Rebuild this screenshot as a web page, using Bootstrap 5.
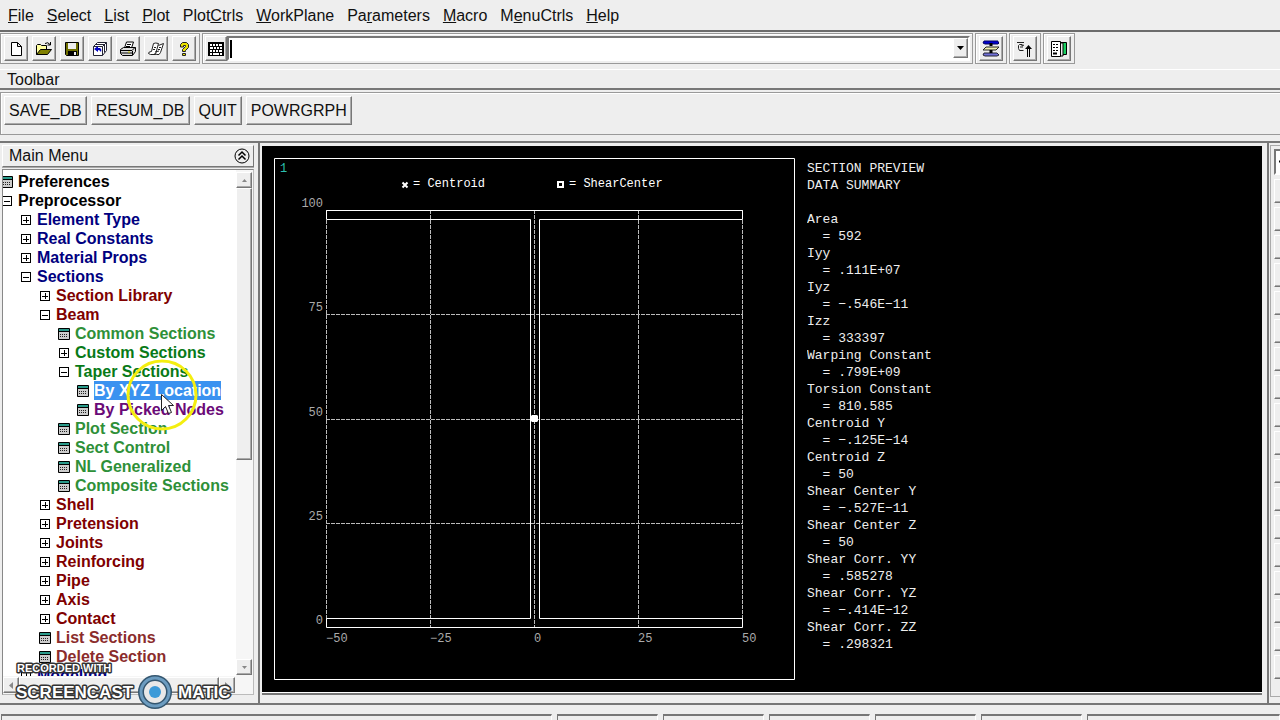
<!DOCTYPE html>
<html lang="en">
<head>
<meta charset="utf-8">
<meta name="viewport" content="width=device-width, initial-scale=1">
<title>Section Preview</title>
<link href="https://cdn.jsdelivr.net/npm/bootstrap@5.3.0/dist/css/bootstrap.min.css" rel="stylesheet">
<style>
  body { background: #eee; color: #111; font: 16px/20px "Liberation Sans", Arial, sans-serif; }
  .app { height: 100vh; min-height: 480px; }
  a { color: inherit; text-decoration: none; }
  .menus { height: 32px; gap: 13px; padding: 1px 8px 0; border-bottom: 2px solid #6c6c6c; }
  .icon-row { height: 37px; gap: 2px; padding-top: 1px; }
  .group-box { display: flex; align-items: center; border: 1px solid #999; box-shadow: inset 1px 1px #fff; height: 31px; padding: 0 3px; }
  .raised { background: #eee; border: 1px solid; border-color: #fff #777 #777 #fff; box-shadow: inset -1px -1px #aaa; padding: 0; border-radius: 0; color: #111; }
  .tool { width: 24px; height: 25px; display: flex; align-items: center; justify-content: center; }
  .tool svg { display: block; }
  .cmd-box { padding: 0 2px; }
  .cmd-box .tool { width: 22px; }
  .cmd { border: 2px solid; border-color: #777 #fff #fff #777; border-radius: 0; height: 25px; background: #fff; }
  .cmd input { border: 0; outline: 0; padding: 0 2px; height: 21px; font: inherit; caret-color: #000; min-width: 0; }
  .caret { width: 2px; height: 18px; background: #000; margin: 2px 0 0 1px; }
  .drop { width: 15px; height: 20px; }
  .caption-bar { height: 21px; padding: 0 7px; border-top: 1px solid #fff; border-bottom: 2px solid #777; }
  .macro-row { height: 43px; margin-top: 2px; padding: 3px 3px 0; gap: 4px; border: 1px solid #999; border-right: 0; box-shadow: inset 1px 1px #fff; }
  .macro-row .raised { height: 29px; padding: 0 4px; line-height: 25px; }
  .work { margin-top: 6px; border-top: 2px solid #777; border-bottom: 2px solid #777; }
  .side { width: 260px; padding: 2px 4px 8px 2px; border-right: 2px solid #777; }
  .side-head { height: 22px; padding: 0 3px 0 6px; border: 1px solid; border-color: #fff #777 #777 #fff; box-shadow: 0 1px #aaa; }
  .tree-box { margin-top: 2px; border: 1px solid; border-color: #888 #bbb #bbb #888; background: #fff; }
  .tree { font-weight: bold; line-height: 19px; white-space: nowrap; }
  .tree > ul { margin: 2px 0 0 -2px; }
  .tree ul ul { padding-left: 19px; }
  .node { display: flex; align-items: center; gap: 5px; height: 19px; }
  .node svg { width: 12px; height: 12px; flex: none; }
  .l0 { color: #000; } .l1 { color: #000080; } .l2 { color: #800000; } .l2c { color: #8b2c2c; }
  .l3 { color: #087a18; } .l3c { color: #2e9038; } .l4 { color: #6b0a78; }
  .picked { background: #3a92f0; color: #fff; }
  .vscroll { width: 17px; background: #f6f6f6; padding: 2px 1px 1px 0; }
  .sb { width: 16px; height: 16px; flex: none; display: flex; align-items: center; justify-content: center; }
  .thumb { background: #efefef; }
  .hscroll { height: 18px; background: #f6f6f6; padding: 1px 18px 1px 0; }
  .view-col { padding: 3px 5px 10px 2px; }
  .view { background: #000; color: #fff; padding: 12px; gap: 11px; border-bottom: 1px solid #fff; box-shadow: 0 2px #777; }
  .view svg { flex: none; width: 522px; height: 523px; }
  .view svg text { font: 12px "Liberation Mono", "Courier New", monospace; fill: #fff; }
  .view svg .tick { fill: #aaa; }
  .summary { margin: 2px 0 0; font: 13px/17px "Liberation Mono", "Courier New", monospace; color: #eee; }
  .dock { width: 13px; border-left: 2px solid #777; padding: 2px 0 6px 1px; }
  .dock-in { border: 1px solid #aaa; border-right: 0; padding: 3px 0 0 3px; height: 100%; gap: 4px; }
  .dock .pick { border: 2px solid; border-color: #777 #fff #fff #777; background: #fff; height: 26px; width: 30px; flex: none; padding: 0; border-radius: 0; }
  .dock .raised { width: 30px; height: 24px; flex: none; }
  .status-row { height: 15px; padding: 9px 0 0 1px; gap: 5px; }
  .cell { border: 1px solid #777; border-bottom: 0; border-right-color: #fff; border-top-width: 2px; height: 6px; }
  .cell-s { width: 101px; }
  .overlay { position: absolute; pointer-events: none; }
  .recorder text { font: bold 17px "Liberation Sans", Arial, sans-serif; fill: #fff; stroke: #333; stroke-width: 3px; paint-order: stroke; stroke-linejoin: round; }
  .recorder .top-line { font-size: 11px; }
</style>
<script src="https://cdn.jsdelivr.net/npm/bootstrap@5.3.0/dist/js/bootstrap.bundle.min.js"></script>
</head>
<body>
<svg class="d-none" aria-hidden="true">
  <symbol id="plus" viewBox="0 0 12 12"><path d="M1.5 1.5h9v9h-9zM3 6h6M6 3v6" fill="#fff" stroke="#000" shape-rendering="crispEdges"/></symbol>
  <symbol id="minus" viewBox="0 0 12 12"><path d="M1.5 1.5h9v9h-9zM3 6h6" fill="#fff" stroke="#000" shape-rendering="crispEdges"/></symbol>
  <symbol id="dlg" viewBox="0 0 12 12"><path d="M.5.5h11v11H.5z" fill="#ccc" stroke="#000"/><path d="M1 1h10v2H1z" fill="#2a9a8a"/><path d="M1 3.5h10" stroke="#000"/><path d="M2 6.500h8M2 8.500h8" stroke="#222" stroke-dasharray="1 1"/></symbol>
</svg>
<div class="app d-flex flex-column overflow-hidden position-relative">
  <nav class="menus d-flex align-items-center flex-shrink-0">
    <a href="#"><u>F</u>ile</a><a href="#"><u>S</u>elect</a><a href="#"><u>L</u>ist</a><a href="#"><u>P</u>lot</a><a href="#">Plot<u>C</u>trls</a><a href="#"><u>W</u>orkPlane</a><a href="#">Pa<u>r</u>ameters</a><a href="#"><u>M</u>acro</a><a href="#">M<u>e</u>nuCtrls</a><a href="#"><u>H</u>elp</a>
  </nav>

  <div class="icon-row d-flex flex-shrink-0">
    <div class="group-box gap-1">
      <button class="raised tool" aria-label="New"><svg width="18" height="18" viewBox="0 0 18 18"><path d="M4.500 2.500h6l4 4v9h-10zM10.500 2.500v4h4" fill="#fff" stroke="#000"/></svg></button>
      <button class="raised tool" aria-label="Open"><svg width="18" height="18" viewBox="0 0 18 18"><path d="M1.500 14.500v-9l1-1h3l1 1h5v4" fill="#ffffa0" stroke="#000"/><path d="M1.500 14.500l4-5h11l-4 5z" fill="#808000" stroke="#000"/><path d="M10 3.500q3-2 5 1M15.500 2v3h-3" fill="none" stroke="#000"/></svg></button>
      <button class="raised tool" aria-label="Save"><svg width="18" height="18" viewBox="0 0 18 18"><path d="M2.500 2.500h13v13h-12l-1-1z" fill="#6f6f00" stroke="#000"/><path d="M5 3h8v6H5z" fill="#eee"/><path d="M5 11h9v5H5z" fill="#000"/><path d="M11 12h2v3h-2z" fill="#eee"/></svg></button>
      <button class="raised tool" aria-label="Resume"><svg width="18" height="18" viewBox="0 0 18 18"><path d="M2.500 6.500l4-4h9v8l-4 5h-9zM2.500 6.500h9v9M11.500 6.500l4-4M4.500 4.500h9v8" fill="#fff" stroke="#223"/><path d="M3 9l4-3v2h2q2 1 1 4-1-2-3-2v2z" fill="#0000c0"/></svg></button>
      <button class="raised tool" aria-label="Print"><svg width="18" height="18" viewBox="0 0 18 18"><path d="M5.500 8l2-6h7l-2 6" fill="#fff" stroke="#000"/><path d="M8 4.500h4M7 6.500h4" stroke="#000"/><path d="M1.500 9.500l3-2h12v4l-3 4h-10l-2-2z" fill="#ddd" stroke="#000"/><path d="M2 10.500h11l3-3M2 13h11M13.500 11v4" fill="none" stroke="#000"/><path d="M9 12h2" stroke="#cc0" /></svg></button>
      <button class="raised tool" aria-label="Report"><svg width="18" height="18" viewBox="0 0 18 18"><path d="M6.500 3.500l-2 8q-3 0-3 2l2 1h5l3-11q-3-1-5 0zM11.500 5.500l5-2-3 9q-1 3-4 2l-2-1" fill="#fff" stroke="#222"/><path d="M7 7.500h2M6 9.500h2M12 7.500h2M11 9.500h2M8 12l4-1" stroke="#222"/></svg></button>
      <button class="raised tool" aria-label="Help"><svg width="18" height="18" viewBox="0 0 18 18"><path d="M5.500 7V4.500l2-2h4l2 2v3l-3 3v1h-3v-2l3-3v-1h-2V7zM7.500 13.500h3v2h-3z" fill="#e8e000" stroke="#222"/></svg></button>
    </div>
    <div class="group-box cmd-box" style="width:60.2%">
      <button class="raised tool flex-shrink-0" aria-label="Command history"><svg width="18" height="18" viewBox="0 0 18 18" shape-rendering="crispEdges"><path d="M1 2h16v14H1z"/><path d="M3 5h2M6 5h2M9 5h2M12 5h3M3 8h3M7 8h2M10 8h2M13 8h2M3 11h2M6 11h2M9 11h2M12 11h3M3 14h2M6 14h6M13 14h2" stroke="#fff" stroke-width="2"/></svg></button>
      <div class="cmd d-flex flex-grow-1"><span class="caret"></span><input class="flex-grow-1" type="text" aria-label="Command"><button class="raised drop" aria-label="Show recent commands"><svg width="7" height="4" viewBox="0 0 7 4" class="d-block mx-auto"><path d="M0 0h7L3.500 4z"/></svg></button></div>
    </div>
    <div class="group-box"><button class="raised tool" aria-label="Raise hidden"><svg width="18" height="18" viewBox="0 0 18 18"><path d="M2 1h14v1l1 1-1 1H3L1 3z" fill="#0000d0" stroke="#000060"/><path d="M1 10l3-3h13l-3 3z" fill="#eeeeb0" stroke="#222"/><path d="M2 13h13l2 2-2 1H3l-2-1z" fill="#7070d8" stroke="#223"/><path d="M9 3v3M9 10v3" stroke="#000" stroke-width="3"/></svg></button></div>
    <div class="group-box"><button class="raised tool" aria-label="Reset picking"><svg width="18" height="18" viewBox="0 0 18 18"><path d="M1 2.500h7M6 4.500H3.500l-1 1v3l1 2h4M6 4v2l2-1M4 7h3" fill="none" stroke="#222"/><path d="M9 9l3.500-4L16 9z"/><path d="M11.500 8v9M13.500 8v9" stroke="#000"/></svg></button></div>
    <div class="group-box"><button class="raised tool" aria-label="Contact manager"><svg width="18" height="18" viewBox="0 0 18 18"><path d="M9.500 2.500h7v12h-7z" fill="#18d060" stroke="#000"/><path d="M10 3h3v13h-3z" fill="#eee" stroke="#000"/><path d="M1.500 1.500h9v15h-9z" fill="#fff" stroke="#000"/><path d="M3 4.500h6M3 7.500h6M3 10.500h6" stroke="#000" stroke-dasharray="2 1"/><path d="M3 13.500h4" stroke="#000" stroke-width="2"/></svg></button></div>
  </div>

  <div class="caption-bar flex-shrink-0">Toolbar</div>
  <div class="macro-row d-flex align-items-start flex-shrink-0">
    <button class="raised">SAVE_DB</button><button class="raised">RESUM_DB</button><button class="raised">QUIT</button><button class="raised">POWRGRPH</button>
  </div>

  <main class="work d-flex flex-grow-1 overflow-hidden">
    <aside class="side d-flex flex-column flex-shrink-0">
      <div class="side-head d-flex align-items-center justify-content-between flex-shrink-0">Main Menu
        <button class="border-0 p-0 bg-transparent d-flex" aria-label="Collapse menu"><svg width="16" height="16" viewBox="0 0 16 16" fill="none" stroke="#000"><circle cx="8" cy="8" r="7"/><path d="M4.500 7.500L8 4l3.500 3.500M4.500 11.500L8 8l3.500 3.500" stroke-width="1.500"/></svg></button>
      </div>
      <div class="tree-box d-flex flex-column flex-grow-1 overflow-hidden">
        <div class="d-flex flex-grow-1 overflow-hidden">
          <div class="tree flex-grow-1 overflow-hidden">
            <ul class="list-unstyled">
              <li><div class="node l0"><svg><use href="#dlg"/></svg><a href="#">Preferences</a></div></li>
              <li><div class="node l0"><svg><use href="#minus"/></svg><a href="#">Preprocessor</a></div>
                <ul class="list-unstyled">
                  <li><div class="node l1"><svg><use href="#plus"/></svg><a href="#">Element Type</a></div></li>
                  <li><div class="node l1"><svg><use href="#plus"/></svg><a href="#">Real Constants</a></div></li>
                  <li><div class="node l1"><svg><use href="#plus"/></svg><a href="#">Material Props</a></div></li>
                  <li><div class="node l1"><svg><use href="#minus"/></svg><a href="#">Sections</a></div>
                    <ul class="list-unstyled">
                      <li><div class="node l2"><svg><use href="#plus"/></svg><a href="#">Section Library</a></div></li>
                      <li><div class="node l2"><svg><use href="#minus"/></svg><a href="#">Beam</a></div>
                        <ul class="list-unstyled">
                          <li><div class="node l3c"><svg><use href="#dlg"/></svg><a href="#">Common Sections</a></div></li>
                          <li><div class="node l3"><svg><use href="#plus"/></svg><a href="#">Custom Sections</a></div></li>
                          <li><div class="node l3"><svg><use href="#minus"/></svg><a href="#">Taper Sections</a></div>
                            <ul class="list-unstyled">
                              <li><div class="node l4"><svg><use href="#dlg"/></svg><a href="#" class="picked">By XYZ Location</a></div></li>
                              <li><div class="node l4"><svg><use href="#dlg"/></svg><a href="#">By Picked Nodes</a></div></li>
                            </ul>
                          </li>
                          <li><div class="node l3c"><svg><use href="#dlg"/></svg><a href="#">Plot Section</a></div></li>
                          <li><div class="node l3c"><svg><use href="#dlg"/></svg><a href="#">Sect Control</a></div></li>
                          <li><div class="node l3c"><svg><use href="#dlg"/></svg><a href="#">NL Generalized</a></div></li>
                          <li><div class="node l3c"><svg><use href="#dlg"/></svg><a href="#">Composite Sections</a></div></li>
                        </ul>
                      </li>
                      <li><div class="node l2"><svg><use href="#plus"/></svg><a href="#">Shell</a></div></li>
                      <li><div class="node l2"><svg><use href="#plus"/></svg><a href="#">Pretension</a></div></li>
                      <li><div class="node l2"><svg><use href="#plus"/></svg><a href="#">Joints</a></div></li>
                      <li><div class="node l2"><svg><use href="#plus"/></svg><a href="#">Reinforcing</a></div></li>
                      <li><div class="node l2"><svg><use href="#plus"/></svg><a href="#">Pipe</a></div></li>
                      <li><div class="node l2"><svg><use href="#plus"/></svg><a href="#">Axis</a></div></li>
                      <li><div class="node l2"><svg><use href="#plus"/></svg><a href="#">Contact</a></div></li>
                      <li><div class="node l2c"><svg><use href="#dlg"/></svg><a href="#">List Sections</a></div></li>
                      <li><div class="node l2c"><svg><use href="#dlg"/></svg><a href="#">Delete Section</a></div></li>
                    </ul>
                  </li>
                  <li><div class="node l1"><svg><use href="#plus"/></svg><a href="#">Modeling</a></div></li>
                </ul>
              </li>
            </ul>
          </div>
          <div class="vscroll d-flex flex-column flex-shrink-0">
            <button class="raised sb" aria-label="Scroll up"><svg width="5" height="3" viewBox="0 0 5 3"><path d="M0 3h5L2.500 0z" fill="#888"/></svg></button>
            <div class="raised thumb" style="height:54%"></div>
            <button class="raised sb mt-auto" aria-label="Scroll down"><svg width="5" height="3" viewBox="0 0 5 3"><path d="M0 0h5L2.500 3z" fill="#888"/></svg></button>
          </div>
        </div>
        <div class="hscroll d-flex flex-shrink-0">
          <button class="raised sb" aria-label="Scroll left"><svg width="4" height="7" viewBox="0 0 4 7"><path d="M4 0v7L0 3.500z" fill="#888"/></svg></button>
          <div class="raised thumb flex-grow-1"></div>
          <button class="raised sb" aria-label="Scroll right"><svg width="4" height="7" viewBox="0 0 4 7"><path d="M0 0v7l4-3.500z" fill="#888"/></svg></button>
        </div>
      </div>
    </aside>

    <section class="view-col d-flex flex-grow-1 overflow-hidden">
      <div class="view d-flex flex-grow-1">
        <svg viewBox="274 158 522 523" fill="none" stroke="#fff" role="img" aria-label="Beam section plot">
          <path d="M274.500 158.500h520v521h-520z"/>
          <g stroke="#bbb" stroke-dasharray="4 1"><path d="M326.500 210v417M430.500 210v417M534.500 210v417M638.500 210v417M742.500 210v417M326 314.500h417M326 419.500h417M326 523.500h417"/></g>
          <path d="M326.500 210.500h416v9h-203v399h203v9h-416v-9h204v-399h-204z"/>
          <path d="M532 415h5l1 1v5l-1 1h-5l-1-1v-5z" fill="#fff" stroke="none"/>
          <path d="M402.500 182.500l5 5M407.500 182.500l-5 5" stroke-width="2"/><path d="M558 182h5v5h-5z" stroke-width="2"/>
          <g stroke="none">
            <text x="280" y="172" style="fill:#2cc0b0">1</text>
            <text x="413" y="187">= Centroid</text><text x="569" y="187">= ShearCenter</text>
            <g text-anchor="end"><text class="tick" x="323" y="207">100</text><text class="tick" x="323" y="311">75</text><text class="tick" x="323" y="416">50</text><text class="tick" x="323" y="520">25</text><text class="tick" x="323" y="624">0</text></g>
            <text class="tick" x="326" y="642">−50</text><text class="tick" x="430" y="642">−25</text><text class="tick" x="534" y="642">0</text><text class="tick" x="638" y="642">25</text><text class="tick" x="742" y="642">50</text>
          </g>
        </svg>
<pre class="summary overflow-hidden">SECTION PREVIEW
DATA SUMMARY

Area
  = 592
Iyy
  = .111E+07
Iyz
  = −.546E−11
Izz
  = 333397
Warping Constant
  = .799E+09
Torsion Constant
  = 810.585
Centroid Y
  = −.125E−14
Centroid Z
  = 50
Shear Center Y
  = −.527E−11
Shear Center Z
  = 50
Shear Corr. YY
  = .585278
Shear Corr. YZ
  = −.414E−12
Shear Corr. ZZ
  = .298321</pre>
      </div>
    </section>

    <div class="dock flex-shrink-0">
      <div class="dock-in d-flex flex-column overflow-hidden">
        <button class="pick" aria-label="Window"><svg width="26" height="20" class="d-block"><path d="M3 9.500h8" stroke="#000" stroke-width="2"/></svg></button>
        <button class="raised" aria-label="Isometric"></button><button class="raised" aria-label="Oblique"></button><button class="raised" aria-label="Front"></button><button class="raised" aria-label="Right"></button><button class="raised" aria-label="Top"></button><button class="raised" aria-label="Back"></button><button class="raised" aria-label="Left"></button><button class="raised" aria-label="Bottom"></button><button class="raised" aria-label="Fit"></button><button class="raised" aria-label="Zoom"></button><button class="raised" aria-label="Zoom back"></button><button class="raised" aria-label="Zoom in"></button><button class="raised" aria-label="Zoom out"></button><button class="raised" aria-label="Pan left"></button><button class="raised" aria-label="Pan right"></button><button class="raised" aria-label="Pan up"></button><button class="raised" aria-label="Pan down"></button><button class="raised" aria-label="Rotate"></button>
      </div>
    </div>
  </main>

  <footer class="status-row d-flex flex-shrink-0 overflow-hidden">
    <div class="cell" style="width:43.1%"></div><div class="cell cell-s"></div><div class="cell cell-s"></div><div class="cell cell-s"></div><div class="cell cell-s"></div><div class="cell cell-s"></div><div class="cell flex-grow-1"></div>
  </footer>

  <svg class="overlay" style="left:126px;top:359px" width="72" height="72" viewBox="0 0 72 72"><circle cx="36" cy="36" r="34" fill="none" stroke="#f4ee10" stroke-width="3"/><path d="M35.500 35.500v16l4-4 3 7 3-1-3-7h5z" fill="#fff" stroke="#222"/></svg>
  <svg class="overlay recorder" style="left:12px;top:660px" width="228" height="54" viewBox="0 0 228 54"><text class="top-line" x="5" y="12">RECORDED WITH</text><text x="4" y="38">SCREENCAST</text><text x="166" y="38">MATIC</text><circle cx="143" cy="32" r="14" fill="#e8e8e8" stroke="#34566f" stroke-width="6"/><circle cx="143" cy="32" r="14" fill="none" stroke="#6c9cc0" stroke-width="3"/><circle cx="143" cy="32" r="6" fill="#3c9ad8"/></svg>
</div>
</body>
</html>
